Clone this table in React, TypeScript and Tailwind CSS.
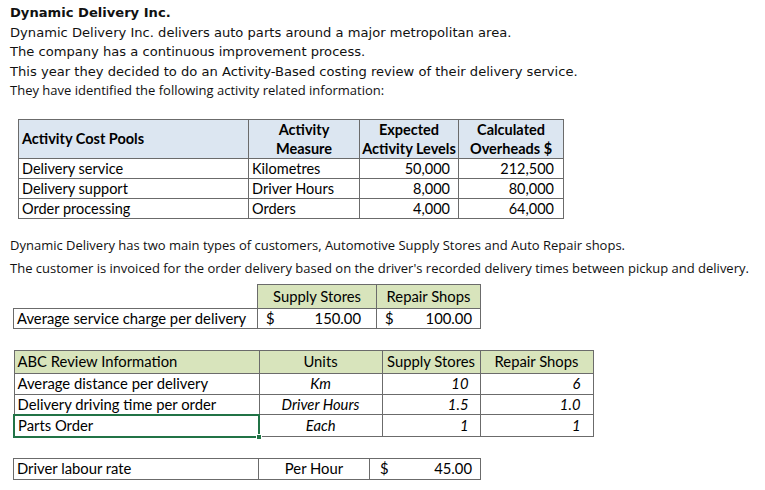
import React from "react";

const cal = { fontFamily: "Lato, 'Liberation Sans', sans-serif" } as React.CSSProperties;

export default function App() {
  const bd = "border border-[#6b6b6b] p-0";
  return (
    <div className="w-[765px] h-[490px] bg-white text-black overflow-hidden">
      <div className="pl-[10px] pt-[3px] text-[13.1px] leading-[19.6px] text-[#111]" style={{ fontFamily: "'DejaVu Sans', Verdana, sans-serif" }}>
        <div className="font-bold">Dynamic Delivery Inc.</div>
        <div>Dynamic Delivery Inc. delivers auto parts around a major metropolitan area.</div>
        <div>The company has a continuous improvement process.</div>
        <div>This year they decided to do an Activity-Based costing review of their delivery service.</div>
        <div className="text-[13px]" style={{ fontFamily: "'Open Sans', sans-serif" }}>They have identified the following activity related information:</div>
      </div>

      <table className="ml-[18px] mt-[18px] border-collapse table-fixed text-[14.5px]" style={cal}>
        <colgroup>
          <col className="w-[230px]" />
          <col className="w-[111px]" />
          <col className="w-[99px]" />
          <col className="w-[105px]" />
        </colgroup>
        <thead>
          <tr className="h-[39px] bg-[#dce6f1] font-bold leading-[19px]">
            <th className={`${bd} text-left pl-[3px] font-bold`}>Activity Cost Pools</th>
            <th className={`${bd} text-center font-bold`}>Activity<br />Measure</th>
            <th className={`${bd} text-center font-bold`}>Expected<br />Activity Levels</th>
            <th className={`${bd} text-center font-bold`}>Calculated<br />Overheads $</th>
          </tr>
        </thead>
        <tbody className="leading-[19px]">
          {[
            ["Delivery service", "Kilometres", "50,000", "212,500"],
            ["Delivery support", "Driver Hours", "8,000", "80,000"],
            ["Order processing", "Orders", "4,000", "64,000"],
          ].map((r) => (
            <tr key={r[0]} className="h-[20px]">
              <td className={`${bd} pl-[3px]`}>{r[0]}</td>
              <td className={`${bd} pl-[3px]`}>{r[1]}</td>
              <td className={`${bd} pr-[8px] text-right`}>{r[2]}</td>
              <td className={`${bd} pr-[9px] text-right`}>{r[3]}</td>
            </tr>
          ))}
        </tbody>
      </table>

      <div className="pl-[10px] mt-[15px] text-[13px] leading-[23px] text-[#111]" style={{ fontFamily: "'Open Sans', sans-serif" }}>
        <div>Dynamic Delivery has two main types of customers, Automotive Supply Stores and Auto Repair shops.</div>
        <div>The customer is invoiced for the order delivery based on the driver's recorded delivery times between pickup and delivery.</div>
      </div>

      <table className="ml-[13px] mt-[4px] border-collapse table-fixed text-[14.8px]" style={cal}>
        <colgroup>
          <col className="w-[244px]" />
          <col className="w-[119px]" />
          <col className="w-[104px]" />
        </colgroup>
        <tbody className="leading-[19px]">
          <tr className="h-[24px]">
            <td className="p-0"></td>
            <td className={`${bd} bg-[#d8e4bc] text-center`}>Supply Stores</td>
            <td className={`${bd} bg-[#d8e4bc] text-center`}>Repair Shops</td>
          </tr>
          <tr className="h-[20px]">
            <td className={`${bd} pl-[3px]`}>Average service charge per delivery</td>
            <td className={`${bd} pl-[8px] pr-[15px]`}>
              <div className="flex justify-between"><span>$</span><span>150.00</span></div>
            </td>
            <td className={`${bd} pl-[8px] pr-[8px]`}>
              <div className="flex justify-between"><span>$</span><span>100.00</span></div>
            </td>
          </tr>
        </tbody>
      </table>

      <table className="ml-[13px] mt-[21px] border-collapse table-fixed text-[14.8px]" style={cal}>
        <colgroup>
          <col className="w-[245px]" />
          <col className="w-[123px]" />
          <col className="w-[98px]" />
          <col className="w-[113px]" />
        </colgroup>
        <tbody className="leading-[19px]">
          <tr className="h-[23px] bg-[#d8e4bc]">
            <td className={`${bd} pl-[3px]`}>ABC Review Information</td>
            <td className={`${bd} text-center`}>Units</td>
            <td className={`${bd} text-center`}>Supply Stores</td>
            <td className={`${bd} text-center`}>Repair Shops</td>
          </tr>
          {[
            ["Average distance per delivery", "Km", "10", "6", "h-[21px]"],
            ["Delivery driving time per order", "Driver Hours", "1.5", "1.0", "h-[20px]"],
          ].map((r) => (
            <tr key={r[0]} className={r[4]}>
              <td className={`${bd} pl-[3px]`}>{r[0]}</td>
              <td className={`${bd} text-center italic`}>{r[1]}</td>
              <td className={`${bd} pr-[11px] text-right italic`}>{r[2]}</td>
              <td className={`${bd} pr-[12px] text-right italic`}>{r[3]}</td>
            </tr>
          ))}
          <tr className="h-[22px]">
            <td className="relative border-2 border-[#217346] p-0 pl-[3px]">
              Parts Order
              <span className="absolute -right-[4px] -bottom-[4px] w-[6px] h-[6px] bg-[#217346] border border-white"></span>
            </td>
            <td className={`${bd} text-center italic`}>Each</td>
            <td className={`${bd} pr-[11px] text-right italic`}>1</td>
            <td className={`${bd} pr-[12px] text-right italic`}>1</td>
          </tr>
        </tbody>
      </table>

      <table className="ml-[13px] mt-[20px] border-collapse table-fixed text-[14.8px]" style={cal}>
        <colgroup>
          <col className="w-[245px]" />
          <col className="w-[111px]" />
          <col className="w-[111px]" />
        </colgroup>
        <tbody className="leading-[19px]">
          <tr className="h-[21px]">
            <td className={`${bd} pl-[3px]`}>Driver labour rate</td>
            <td className={`${bd} text-center`}>Per Hour</td>
            <td className={`${bd} pl-[10px] pr-[8px]`}>
              <div className="flex justify-between"><span>$</span><span>45.00</span></div>
            </td>
          </tr>
        </tbody>
      </table>
    </div>
  );
}
